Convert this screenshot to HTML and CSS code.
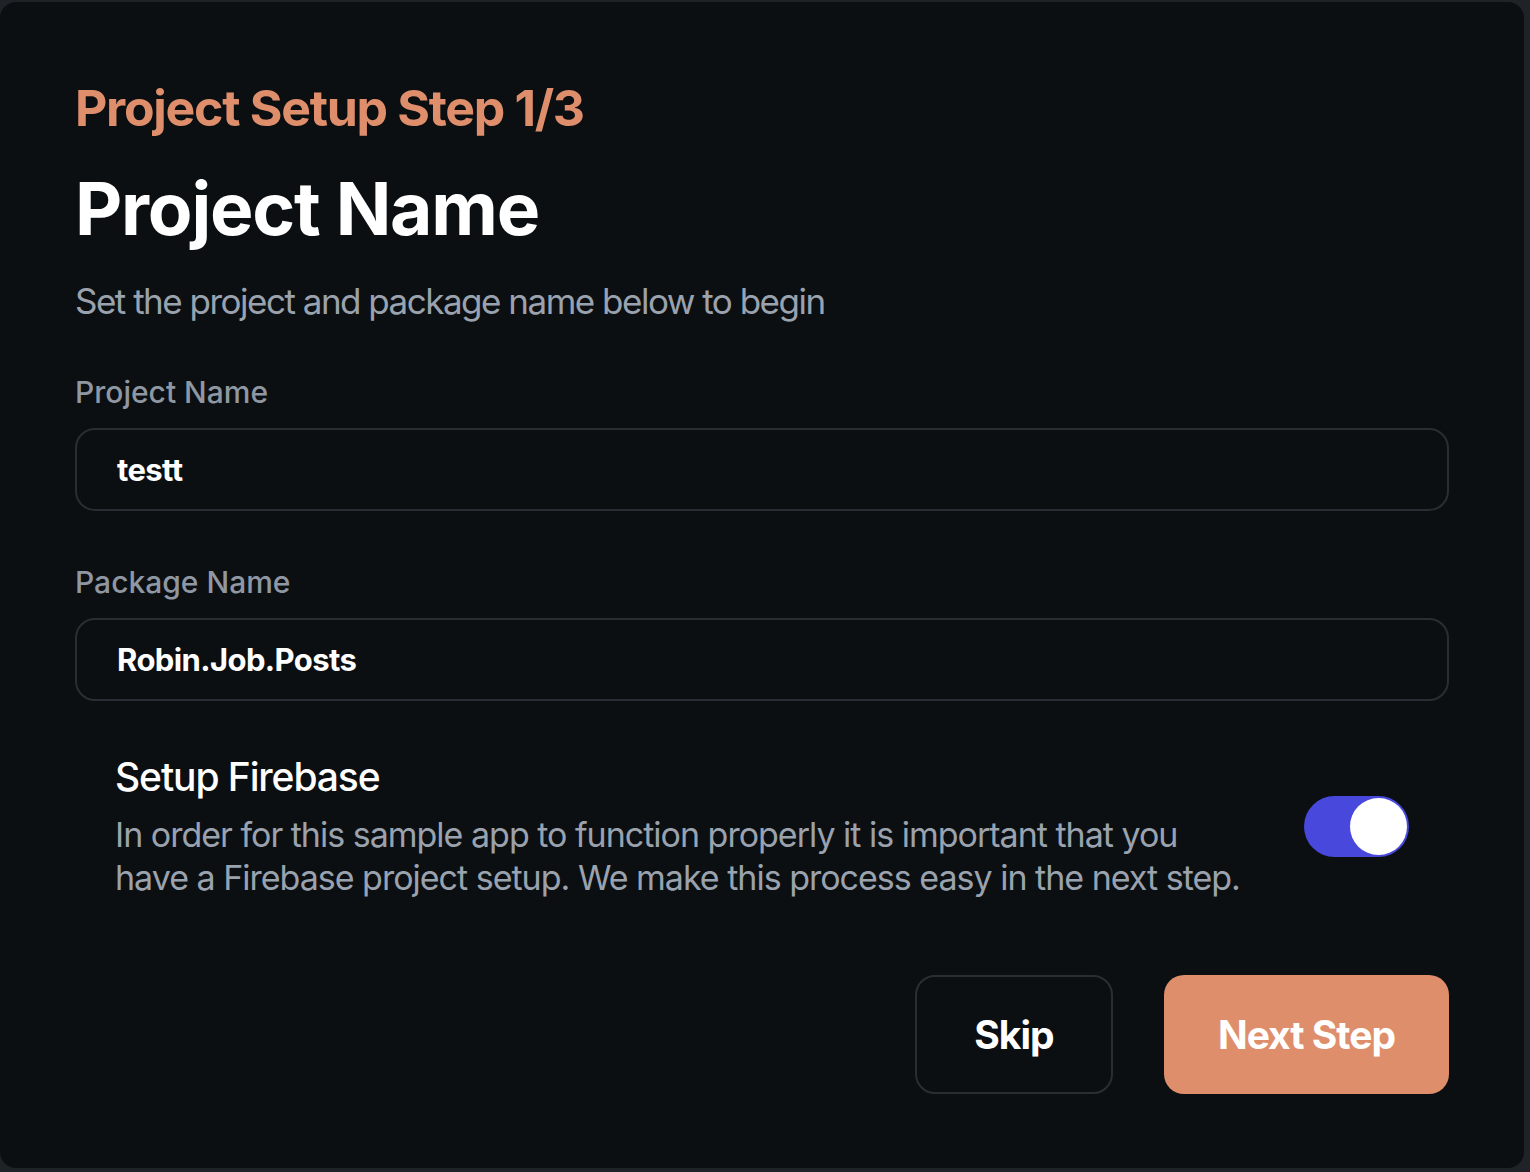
FILE: index.html
```html
<!DOCTYPE html>
<html lang="en">
<head>
<meta charset="utf-8">
<title>Project Setup</title>
<link rel="stylesheet" href="styles.css">
</head>
<body>
  <main class="card">
    <p class="step">Project Setup Step 1/3</p>
    <h1 class="heading">Project Name</h1>
    <p class="subtitle">Set the project and package name below to begin</p>

    <label class="label label-first">Project Name</label>
    <div class="field">testt</div>

    <label class="label">Package Name</label>
    <div class="field">Robin.Job.Posts</div>

    <section class="firebase">
      <div class="firebase-text">
        <h2 class="firebase-title">Setup Firebase</h2>
        <p class="firebase-desc">In order for this sample app to function properly it is important that you<br>have a Firebase project setup. We make this process easy in the next step.</p>
      </div>
      <div class="toggle"><span class="knob"></span></div>
    </section>

    <div class="actions">
      <button class="btn btn-skip">Skip</button>
      <button class="btn btn-next">Next Step</button>
    </div>
  </main>
</body>
</html>
```

FILE: styles.css
```css
* { box-sizing: border-box; }

html, body {
  margin: 0;
  padding: 0;
}

body {
  background: #1f2328;
  width: 1530px;
  height: 1172px;
  overflow: hidden;
  font-family: "Inter", "Liberation Sans", sans-serif;
}

.card {
  margin-top: 2px;
  width: 1524px;
  height: 1166px;
  background: #0b0f12;
  border-radius: 16px;
  padding: 75px 75px 0 75px;
  display: flex;
  flex-direction: column;
}

.step {
  margin: 0;
  font-size: 50px;
  line-height: 62px;
  font-weight: 700;
  color: #df8e6b;
  letter-spacing: -1.3px;
}

.heading {
  margin: 26px 0 0 0;
  font-size: 73px;
  line-height: 88px;
  font-weight: 700;
  color: #ffffff;
  letter-spacing: -1.2px;
}

.subtitle {
  margin: 25px 0 0 0;
  font-size: 35px;
  line-height: 46px;
  font-weight: 400;
  color: #9aa2ae;
  letter-spacing: -1.5px;
}

.label {
  display: block;
  margin-top: 53px;
  font-size: 30px;
  line-height: 36px;
  font-weight: 500;
  color: #8f97a2;
}

.label-first {
  margin-top: 50px;
}

.field {
  margin-top: 18px;
  height: 83px;
  border: 2px solid #2a2e34;
  border-radius: 20px;
  padding: 0 40px;
  display: flex;
  align-items: center;
  font-size: 31px;
  font-weight: 700;
  color: #ffffff;
  letter-spacing: -0.6px;
}

.firebase {
  margin-top: 52px;
  padding: 0 40px;
  display: flex;
  align-items: center;
  justify-content: space-between;
}

.firebase-title {
  margin: 0;
  font-size: 39px;
  line-height: 48px;
  font-weight: 500;
  color: #ffffff;
  letter-spacing: -1.1px;
}

.firebase-desc {
  margin: 12px 0 0 0;
  font-size: 34px;
  line-height: 43px;
  font-weight: 400;
  color: #9aa2ae;
  letter-spacing: -1px;
  white-space: nowrap;
}

.toggle {
  width: 105px;
  height: 61px;
  border-radius: 31px;
  background: #4848dd;
  display: flex;
  align-items: center;
  justify-content: flex-end;
  padding-right: 2px;
  flex-shrink: 0;
}

.knob {
  width: 57px;
  height: 57px;
  border-radius: 50%;
  background: #ffffff;
}

.actions {
  margin-top: 76px;
  display: flex;
  justify-content: flex-end;
  gap: 51px;
}

.btn {
  height: 119px;
  border-radius: 20px;
  font-family: inherit;
  font-size: 39px;
  font-weight: 700;
  color: #ffffff;
  letter-spacing: -1px;
  cursor: pointer;
}

.btn-skip {
  width: 198px;
  background: #0b0f12;
  border: 2px solid #2a2e34;
}

.btn-next {
  width: 285px;
  background: #df8e6b;
  border: none;
}
```
